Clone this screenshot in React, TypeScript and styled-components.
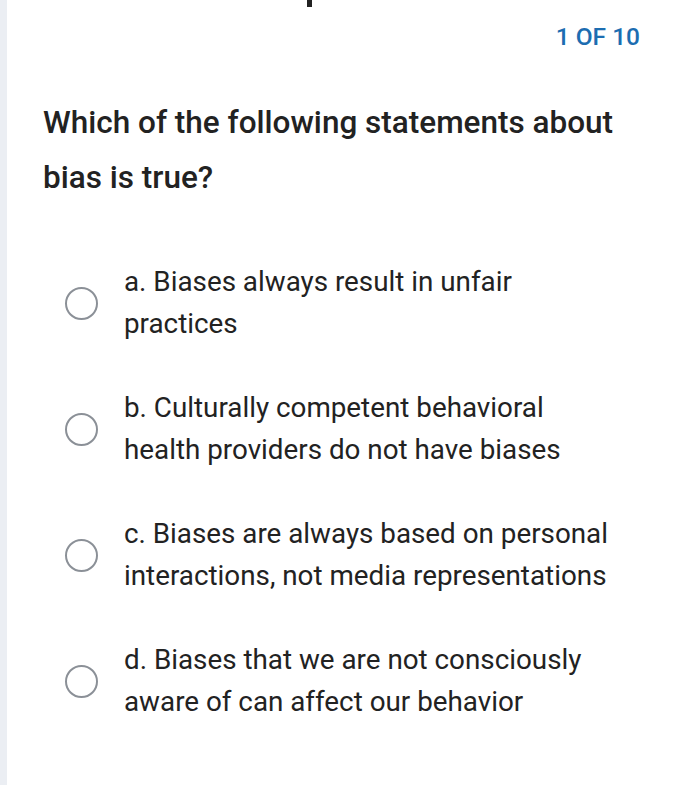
import React from 'react';
import styled, {createGlobalStyle} from "styled-components";

const GlobalStyle = createGlobalStyle`
    html, body {
        margin: 0;
        padding: 0;
        background: #ffffff;
    }
    body {
        font-family: Roboto, "Noto Sans", "Liberation Sans", sans-serif;
        color: #222222;
    }
`

const options = [
    'a. Biases always result in unfair practices',
    'b. Culturally competent behavioral health providers do not have biases',
    'c. Biases are always based on personal interactions, not media representations',
    'd. Biases that we are not consciously aware of can affect our behavior',
];

export default function App() {
    return (
        <>
            <GlobalStyle/>
            <Page>
                <SideStrip/>
                <Content>
                    <TopMark/>
                    <Counter>1 OF 10</Counter>
                    <Question>Which of the following statements about bias is true?</Question>
                    <OptionList>
                        {options.map((text) => (
                            <Option key={text}>
                                <Radio/>
                                <OptionText>{text}</OptionText>
                            </Option>
                        ))}
                    </OptionList>
                </Content>
            </Page>
        </>
    );
}

const Page = styled.div`
    display: flex;
    width: 675px;
    height: 785px;
    overflow: hidden;
`
const SideStrip = styled.div`
    width: 7px;
    flex-shrink: 0;
    background-color: #ebeef3;
`
const Content = styled.main`
    position: relative;
    flex: 1;
    padding: 0 35px 0 36px;
`
const TopMark = styled.span`
    position: absolute;
    top: 0;
    left: 300px;
    width: 5px;
    height: 7px;
    background-color: #222;
`
const Counter = styled.div`
    text-align: right;
    padding-top: 23px;
    font-size: 24.5px;
    line-height: 28px;
    font-weight: 500;
    color: #1c6db1;
`
const Question = styled.h1`
    margin: 44px 0 0;
    font-size: 31.5px;
    line-height: 55px;
    font-weight: 500;
    color: #222;
    max-width: 592px;
`
const OptionList = styled.div`
    display: flex;
    flex-direction: column;
    gap: 42px;
    margin-top: 56px;
    padding-left: 22px;
`
const Option = styled.label`
    display: flex;
    align-items: center;
    gap: 26px;
`
const Radio = styled.span`
    width: 33px;
    height: 33px;
    box-sizing: border-box;
    border: 2.5px solid #8b9097;
    border-radius: 50%;
    flex-shrink: 0;
`
const OptionText = styled.span`
    font-size: 27.8px;
    line-height: 42px;
    color: #222;
    max-width: 495px;
`
